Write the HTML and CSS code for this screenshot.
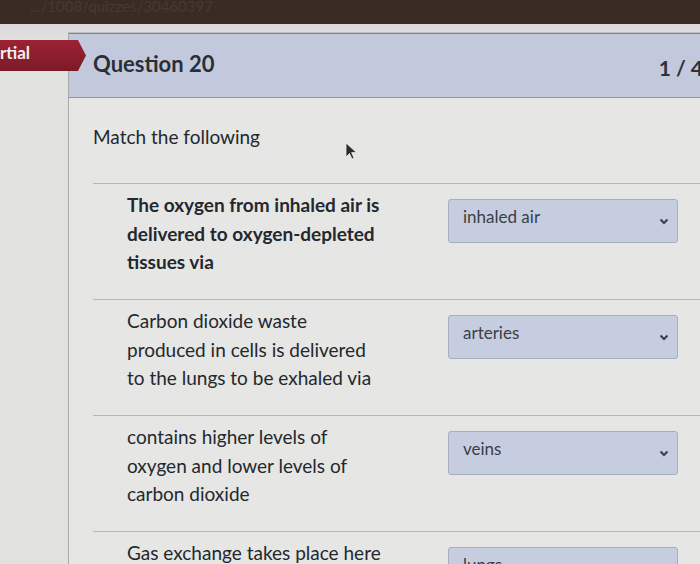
FILE: index.html
```html
<!DOCTYPE html>
<html lang="en">
<head>
    <meta charset="UTF-8">
    <meta name="viewport" content="width=device-width, initial-scale=1.0">
    <title>Quiz: Question 20</title>
    <link rel="stylesheet" href="styles.css">
</head>
<body>
    <div class="topbar">
        <span class="url">.../1008/quizzes/30460397</span>
    </div>

    <div class="page">
        <aside class="sidebar">
            <div class="status-tab">Partial</div>
        </aside>

        <div class="question-card">
            <header class="question-header">
                <h2>Question 20</h2>
                <span class="points">1 / 4</span>
            </header>

            <div class="question-body">
                <p class="prompt">Match the following</p>
                <svg class="cursor" width="14" height="18" viewBox="0 0 14 18">
                    <path d="M1 1 L1 15 L4.5 11.5 L7 17 L9 16 L6.6 10.6 L11.5 10.6 Z" fill="#2b2b2b" stroke="#eee" stroke-width="0.8"/>
                </svg>

                <div class="match-list">
                    <div class="match-row">
                        <div class="match-text strong">The oxygen from inhaled air is delivered to oxygen-depleted tissues via</div>
                        <div class="select">
                            <span>inhaled air</span>
                            <svg class="chevron" width="10" height="7" viewBox="0 0 10 7"><path d="M1.5 1.5 L5 5 L8.5 1.5" fill="none" stroke="#3a3f46" stroke-width="2"/></svg>
                        </div>
                    </div>
                    <div class="match-row">
                        <div class="match-text">Carbon dioxide waste produced in cells is delivered to the lungs to be exhaled via</div>
                        <div class="select">
                            <span>arteries</span>
                            <svg class="chevron" width="10" height="7" viewBox="0 0 10 7"><path d="M1.5 1.5 L5 5 L8.5 1.5" fill="none" stroke="#3a3f46" stroke-width="2"/></svg>
                        </div>
                    </div>
                    <div class="match-row">
                        <div class="match-text">contains higher levels of oxygen and lower levels of carbon dioxide</div>
                        <div class="select">
                            <span>veins</span>
                            <svg class="chevron" width="10" height="7" viewBox="0 0 10 7"><path d="M1.5 1.5 L5 5 L8.5 1.5" fill="none" stroke="#3a3f46" stroke-width="2"/></svg>
                        </div>
                    </div>
                    <div class="match-row">
                        <div class="match-text">Gas exchange takes place here</div>
                        <div class="select">
                            <span>lungs</span>
                            <svg class="chevron" width="10" height="7" viewBox="0 0 10 7"><path d="M1.5 1.5 L5 5 L8.5 1.5" fill="none" stroke="#3a3f46" stroke-width="2"/></svg>
                        </div>
                    </div>
                </div>
            </div>
        </div>
    </div>
</body>
</html>
```

FILE: styles.css
```css
* {
    margin: 0;
    padding: 0;
    box-sizing: border-box;
}

body {
    width: 700px;
    height: 564px;
    overflow: hidden;
    background-color: #e3e3e1;
    font-family: Lato, "Open Sans", sans-serif;
    color: #23282e;
}

.topbar {
    height: 24px;
    background-color: #3a2b25;
    padding-left: 30px;
    overflow: hidden;
}

.url {
    font-size: 15px;
    line-height: 12px;
    color: #463933;
    position: relative;
    top: -4px;
}

.page {
    display: flex;
    padding-top: 8px;
    background: linear-gradient(#dadada, #e1e1e0 20px);
    height: 540px;
    overflow: hidden;
}

/* left gutter with the grading tab */
.sidebar {
    width: 68px;
    flex-shrink: 0;
    padding-top: 8px;
}

.status-tab {
    position: relative;
    z-index: 2;
    width: 86px;
    height: 31px;
    background: linear-gradient(#9c2333, #7c1a28);
    clip-path: polygon(0 0, 78px 0, 86px 50%, 78px 100%, 0 100%);
    color: #f4eeee;
    font-weight: 700;
    font-size: 17px;
    line-height: 25px;
    text-indent: -19px;
    overflow: hidden;
    white-space: nowrap;
}

.question-card {
    flex: 1;
    min-width: 640px;
    border-left: 1px solid #a9a9a9;
    border-top: 1px solid #bdbdbd;
}

.question-header {
    height: 65px;
    display: flex;
    align-items: center;
    justify-content: space-between;
    padding: 0 18px 5px 24px;
    margin-right: -13px;
    background-color: #c3c9dd;
    border-top: 1px solid #7d8290;
    border-bottom: 1px solid #8e93a0;
}

.question-header h2 {
    font-size: 22px;
    font-weight: 700;
    color: #2a2f36;
}

.points {
    font-size: 21px;
    font-weight: 700;
    color: #2e3238;
    padding-top: 8px;
    white-space: nowrap;
}

.question-body {
    position: relative;
    padding: 27px 0 0 24px;
    background-color: #e6e6e4;
    height: 480px;
}

.prompt {
    font-size: 19px;
    line-height: 24px;
    height: 58px;
}

.cursor {
    position: absolute;
    left: 276px;
    top: 44px;
}

.match-row {
    display: flex;
    justify-content: space-between;
    height: 116px;
    border-top: 1.5px solid #b6b6b4;
    padding: 7px 30px 0 34px;
}

.match-text {
    width: 256px;
    font-size: 19px;
    line-height: 28.5px;
    color: #23282e;
}

.match-text.strong {
    font-weight: 700;
}

.select {
    width: 230px;
    height: 44px;
    margin-top: 8px;
    display: flex;
    align-items: center;
    justify-content: space-between;
    padding: 0 8px 0 14px;
    background-color: #c6cde0;
    border: 1px solid #a7aec2;
    border-radius: 3px;
    font-size: 17px;
    color: #3a3f46;
}

.select span {
    padding-bottom: 9px;
}
```
